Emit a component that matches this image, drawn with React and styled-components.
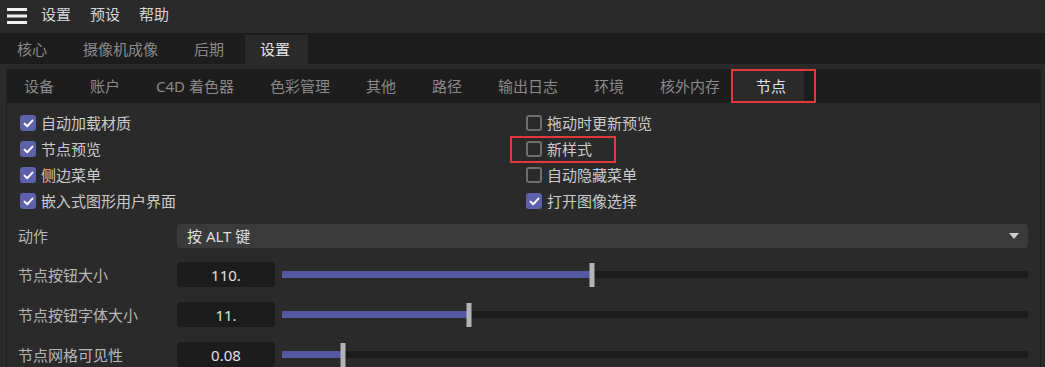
import React from "react";
import styled, { createGlobalStyle } from "styled-components";

const GlobalStyle = createGlobalStyle`
	html, body {
		margin: 0;
		padding: 0;
		background: #2a2a2a;
		overflow: hidden;
	}
	body {
		font-family: "Noto Sans", "Noto Sans CJK SC", sans-serif;
		font-size: 15px;
	}
`;

const topTabs = ["核心", "摄像机成像", "后期", "设置"];
const subTabs = ["设备", "账户", "C4D 着色器", "色彩管理", "其他", "路径", "输出日志", "环境", "核外内存", "节点"];

const checks = [
	{ label: "自动加载材质", checked: true },
	{ label: "拖动时更新预览", checked: false },
	{ label: "节点预览", checked: true },
	{ label: "新样式", checked: false, marked: true },
	{ label: "侧边菜单", checked: true },
	{ label: "自动隐藏菜单", checked: false },
	{ label: "嵌入式图形用户界面", checked: true },
	{ label: "打开图像选择", checked: true },
];

const sliders = [
	{ label: "节点按钮大小", value: "110.", pos: 0.415 },
	{ label: "节点按钮字体大小", value: "11.", pos: 0.251 },
	{ label: "节点网格可见性", value: "0.08", pos: 0.082 },
];

const App = () => {
	return (
		<>
			<GlobalStyle />
			<Window>
				<MenuBar>
					<svg width="20" height="16" viewBox="0 0 20 16">
						<rect x="0" y="0" width="20" height="3" fill="#f0f0f0" />
						<rect x="0" y="6.5" width="20" height="3" fill="#f0f0f0" />
						<rect x="0" y="13" width="20" height="3" fill="#f0f0f0" />
					</svg>
					<MenuItems>
						<MenuItem>设置</MenuItem>
						<MenuItem>预设</MenuItem>
						<MenuItem>帮助</MenuItem>
					</MenuItems>
				</MenuBar>

				<TabBar>
					{topTabs.map((t) => (
						<Tab key={t} $active={t === "设置"}>
							{t}
						</Tab>
					))}
				</TabBar>

				<Panel>
					<SubTabBar>
						{subTabs.map((t) => (
							<SubTab key={t} $active={t === "节点"} $marked={t === "节点"}>
								{t}
							</SubTab>
						))}
					</SubTabBar>

					<Checks>
						{checks.map((c) => (
							<CheckRow key={c.label} $marked={c.marked}>
								<Box $checked={c.checked}>
									{c.checked && (
										<svg width="11" height="9" viewBox="0 0 11 9">
											<path
												d="M1.5 4.6 L4.2 7.2 L9.5 1.6"
												fill="none"
												stroke="#ffffff"
												strokeWidth="2"
												strokeLinecap="round"
												strokeLinejoin="round"
											/>
										</svg>
									)}
								</Box>
								<CheckLabel>{c.label}</CheckLabel>
							</CheckRow>
						))}
					</Checks>

					<Fields>
						<DropdownRow>
							<FieldLabel>动作</FieldLabel>
							<Dropdown>
								<span>按 ALT 键</span>
								<svg width="10" height="6" viewBox="0 0 10 6">
									<path d="M0 0 L10 0 L5 6 Z" fill="#d0d0d0" />
								</svg>
							</Dropdown>
						</DropdownRow>
						{sliders.map((s) => (
							<FieldRow key={s.label}>
								<FieldLabel>{s.label}</FieldLabel>
								<SliderControl>
									<NumberBox>{s.value}</NumberBox>
									<Track>
										<Fill style={{ width: `${s.pos * 100}%` }} />
										<Handle style={{ left: `${s.pos * 100}%` }} />
									</Track>
								</SliderControl>
							</FieldRow>
						))}
					</Fields>
				</Panel>
			</Window>
		</>
	);
};

export default App;

const Window = styled.div`
	width: 1045px;
	height: 367px;
	background: #2a2a2a;
	display: flex;
	flex-direction: column;
	overflow: hidden;
`;

const MenuBar = styled.div`
	height: 33px;
	display: flex;
	align-items: center;
	padding-left: 7px;
	box-sizing: border-box;
	svg {
		margin-top: -1px;
	}
`;

const MenuItems = styled.div`
	display: flex;
	gap: 19px;
	margin-left: 14px;
`;

const MenuItem = styled.div`
	color: #d6d6d6;
	font-size: 15px;
	line-height: 20px;
	margin-top: -5px;
`;

const TabBar = styled.div`
	height: 31px;
	background: #1d1d1d;
	display: flex;
	align-items: flex-end;
	padding-left: 0;
	& > div:first-child {
		margin-left: -1px;
	}
`;

const Tab = styled.div`
	height: 29px;
	line-height: 29px;
	padding: ${(p) => (p.$active ? "0 18px 0 15px" : "0 18px")};
	margin-left: ${(p) => (p.$active ? "3px" : "0")};
	color: ${(p) => (p.$active ? "#e4e4e4" : "#8a8a8a")};
	background: ${(p) => (p.$active ? "#2a2a2a" : "transparent")};
`;

const Panel = styled.div`
	flex: 1;
	margin: 5px 4px 0 6px;
	border-left: 1px solid #1f1f1f;
	border-right: 1px solid #1f1f1f;
	display: flex;
	flex-direction: column;
`;

const SubTabBar = styled.div`
	height: 34px;
	background: #1d1d1d;
	display: flex;
	align-items: flex-end;
	box-sizing: border-box;
	& > div:first-child {
		margin-left: -1px;
	}
`;

const SubTab = styled.div`
	position: relative;
	height: 32px;
	line-height: 31px;
	padding: ${(p) => (p.$active ? "0 18px 0 23px" : "0 18px")};
	margin-left: ${(p) => (p.$active ? "-5px" : "0")};
	color: ${(p) => (p.$active ? "#e4e4e4" : "#8a8a8a")};
	background: ${(p) => (p.$active ? "#2a2a2a" : "transparent")};
	&::after {
		content: "";
		display: ${(p) => (p.$marked ? "block" : "none")};
		position: absolute;
		left: -2px;
		top: -2px;
		width: 85px;
		height: 34px;
		box-sizing: border-box;
		border: 2px solid #e2393b;
	}
`;

const Checks = styled.div`
	display: grid;
	grid-template-columns: 506px 1fr;
	grid-auto-rows: 26px;
	padding: 7px 0 0 13px;
`;

const CheckRow = styled.div`
	position: relative;
	display: flex;
	align-items: center;
	gap: 5px;
	&::after {
		content: "";
		display: ${(p) => (p.$marked ? "block" : "none")};
		position: absolute;
		left: -16px;
		top: 0;
		width: 106px;
		height: 27px;
		box-sizing: border-box;
		border: 2px solid #e2393b;
	}
`;

const Box = styled.div`
	width: 16px;
	height: 16px;
	box-sizing: border-box;
	border-radius: 3px;
	display: flex;
	align-items: center;
	justify-content: center;
	background: ${(p) => (p.$checked ? "#5d60ab" : "transparent")};
	border: ${(p) => (p.$checked ? "none" : "2px solid #6e6e6e")};
`;

const CheckLabel = styled.span`
	color: #cacaca;
	font-size: 15px;
	line-height: 20px;
`;

const Fields = styled.div`
	display: flex;
	flex-direction: column;
	gap: 15px;
	padding: 0 12px 0 11px;
	margin-top: 10px;
`;

const FieldRow = styled.div`
	display: grid;
	grid-template-columns: 159px 1fr;
	align-items: center;
	height: 25px;
`;

const DropdownRow = styled(FieldRow)`
	height: 24px;
	margin-bottom: -1px;
`;

const FieldLabel = styled.div`
	color: #b6b6b6;
	font-size: 15px;
	line-height: 20px;
`;

const Dropdown = styled.div`
	height: 24px;
	background: #3a3a3a;
	border-radius: 4px;
	display: flex;
	align-items: center;
	justify-content: space-between;
	padding: 0 9px 0 10px;
	color: #dedede;
	font-size: 15px;
	span {
		line-height: 20px;
	}
`;

const SliderControl = styled.div`
	display: flex;
	align-items: center;
	gap: 7px;
`;

const NumberBox = styled.div`
	width: 98px;
	height: 25px;
	border-radius: 4px;
	background: #1c1c1c;
	color: #e0e0e0;
	font-size: 15px;
	display: flex;
	align-items: center;
	justify-content: center;
`;

const Track = styled.div`
	position: relative;
	flex: 1;
	height: 7px;
	background: #1c1c1c;
`;

const Fill = styled.div`
	height: 100%;
	background: #5558a2;
`;

const Handle = styled.div`
	position: absolute;
	top: 50%;
	width: 5px;
	height: 24px;
	background: #b4b4b4;
	transform: translate(-50%, -50%);
`;
